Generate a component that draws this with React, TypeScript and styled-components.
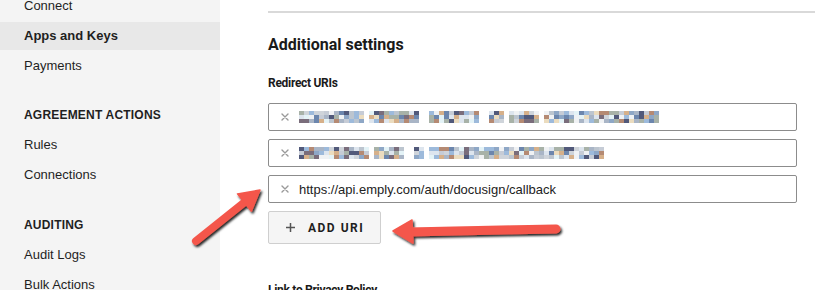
import React from 'react';
import styled, { createGlobalStyle } from 'styled-components';

const GlobalStyle = createGlobalStyle`
  html, body {
    margin: 0;
    padding: 0;
  }
  body {
    font-family: "Liberation Sans", Arial, sans-serif;
    background: #ffffff;
    color: #222222;
  }
`;

const Page = styled.div`
  position: relative;
  display: flex;
  width: 815px;
  height: 290px;
  overflow: hidden;
`;

const Sidebar = styled.nav`
  flex: none;
  width: 220px;
  background: #f4f4f4;
`;

const NavGroup = styled.div<{ $offset: number }>`
  display: flex;
  flex-direction: column;
  gap: 2px;
  margin-top: ${p => p.$offset}px;
`;

const NavItem = styled.div<{ $active?: boolean }>`
  height: 28px;
  padding-left: 24px;
  line-height: 28px;
  font-size: 13px;
  font-weight: ${p => (p.$active ? 700 : 400)};
  color: #1f1f1f;
  background: ${p => (p.$active ? '#e8e8e8' : 'transparent')};
  white-space: nowrap;
`;

const NavTitle = styled(NavItem)`
  font-size: 12px;
  font-weight: 700;
  letter-spacing: 0.2px;
  text-transform: uppercase;
`;

const Main = styled.main`
  flex: 1;
  min-width: 0;
  background: #ffffff;
  padding-left: 48px;
`;

const Divider = styled.div`
  margin-top: 11px;
  height: 2px;
  background: #d9d9d9;
`;

const Form = styled.section`
  padding-right: 18px;
`;

const Heading = styled.h2`
  margin: 22px 0 0;
  font-family: Roboto, "Liberation Sans", sans-serif;
  font-size: 16px;
  line-height: 20px;
  font-weight: 700;
  color: #1a1a1a;
`;

const FieldLabel = styled.div<{ $gap: number }>`
  margin-top: ${p => p.$gap}px;
  font-family: Roboto, "Liberation Sans", sans-serif;
  font-size: 12px;
  line-height: 16px;
  font-weight: 700;
  letter-spacing: -0.3px;
  color: #1a1a1a;
  white-space: nowrap;
`;

const UriList = styled.div`
  display: flex;
  flex-direction: column;
  gap: 8px;
  margin-top: 12px;
`;

const UriRow = styled.div`
  box-sizing: border-box;
  height: 28px;
  display: flex;
  align-items: center;
  padding-left: 12px;
  border: 1px solid #8c8c8c;
  border-radius: 2px;
  background: #ffffff;
`;

const RemoveIcon = styled.svg`
  flex: none;
  width: 8px;
  height: 8px;
  margin-right: 10px;
`;

const UriText = styled.span`
  font-size: 13px;
  color: #222222;
  white-space: nowrap;
`;

const Blur = styled.div`
  display: grid;
  grid-auto-flow: column;
  grid-template-rows: repeat(3, 4px);
  grid-auto-columns: 5px;
`;

const BlurCell = styled.span`
  display: block;
`;

const AddButton = styled.button`
  box-sizing: border-box;
  display: flex;
  align-items: center;
  gap: 13px;
  margin-top: 8px;
  width: 113px;
  height: 33px;
  padding: 0 0 0 17px;
  border: 1px solid #cfcfcf;
  border-radius: 2px;
  background: #f5f5f5;
  font-family: Roboto, "Liberation Sans", sans-serif;
  font-size: 12px;
  font-weight: 700;
  letter-spacing: 1.5px;
  color: #1e1e1e;
`;

const PlusIcon = styled.svg`
  flex: none;
  width: 9px;
  height: 9px;
`;

const Annotations = styled.svg`
  position: absolute;
  left: 0;
  top: 0;
  width: 815px;
  height: 290px;
  pointer-events: none;
`;

const palette = [
  '#c6ccd6', '#a9b5c6', '#8ea7c6', '#6c86ad', '#dde5ee', '#ebdcbf',
  '#d6b08a', '#b58a73', '#7a6d7b', '#a8b2a8', '#e4f3f7', '#bcc5cf',
  '#51597a', '#9dbadb', '#f0f2f4', '#cfd4da',
];

function blurColors(seed: number, segments: number[], gaps: number[]): string[] {
  let s = seed;
  const next = () => {
    s = (s * 1103515245 + 12345) % 2147483648;
    return s / 2147483648;
  };
  const out: string[] = [];
  segments.forEach((len, i) => {
    for (let c = 0; c < len; c++) {
      for (let r = 0; r < 3; r++) {
        out.push(palette[Math.floor(next() * palette.length)]);
      }
    }
    const g = gaps[i] ?? 0;
    for (let c = 0; c < g * 3; c++) out.push('transparent');
  });
  return out;
}

const BlurredText: React.FC<{ seed: number; segments: number[]; gaps: number[] }> = ({ seed, segments, gaps }) => (
  <Blur>
    {blurColors(seed, segments, gaps).map((c, i) => (
      <BlurCell key={i} style={{ background: c }} />
    ))}
  </Blur>
);

const Remove = () => (
  <RemoveIcon viewBox="0 0 8 8">
    <path d="M1 1L7 7M7 1L1 7" stroke="#9a9a9a" strokeWidth="1.4" strokeLinecap="round" />
  </RemoveIcon>
);

const App: React.FC = () => {
  return (
    <>
      <GlobalStyle />
      <Page>
        <Sidebar>
          <NavGroup $offset={-8}>
            <NavItem>Connect</NavItem>
            <NavItem $active>Apps and Keys</NavItem>
            <NavItem>Payments</NavItem>
          </NavGroup>
          <NavGroup $offset={21}>
            <NavTitle>Agreement Actions</NavTitle>
            <NavItem>Rules</NavItem>
            <NavItem>Connections</NavItem>
          </NavGroup>
          <NavGroup $offset={22}>
            <NavTitle>Auditing</NavTitle>
            <NavItem>Audit Logs</NavItem>
            <NavItem>Bulk Actions</NavItem>
          </NavGroup>
        </Sidebar>
        <Main>
          <Divider />
          <Form>
            <Heading>Additional settings</Heading>
            <FieldLabel $gap={20}>Redirect URIs</FieldLabel>
            <UriList>
              <UriRow>
                <Remove />
                <BlurredText seed={7} segments={[13, 10, 10, 3, 6, 23]} gaps={[1, 2, 2, 1, 1]} />
              </UriRow>
              <UriRow>
                <Remove />
                <BlurredText seed={91} segments={[14, 6, 2, 35]} gaps={[1, 2, 1]} />
              </UriRow>
              <UriRow>
                <Remove />
                <UriText>https://api.emply.com/auth/docusign/callback</UriText>
              </UriRow>
            </UriList>
            <AddButton type="button">
              <PlusIcon viewBox="0 0 9 9">
                <path d="M4.5 0V9M0 4.5H9" stroke="#555555" strokeWidth="1.5" />
              </PlusIcon>
              ADD URI
            </AddButton>
            <FieldLabel $gap={38}>Link to Privacy Policy</FieldLabel>
          </Form>
        </Main>
        <Annotations viewBox="0 0 815 290">
          <defs>
            <filter id="arrowShadow" x="-20%" y="-40%" width="140%" height="180%">
              <feDropShadow dx="1.5" dy="2" stdDeviation="1" floodColor="#000000" floodOpacity="0.85" />
            </filter>
          </defs>
          <g filter="url(#arrowShadow)" fill="#f4574b" stroke="#f4574b">
            <line x1="196" y1="241" x2="246" y2="201" strokeWidth="8" strokeLinecap="round" />
            <polygon points="260,190 251.3,211.1 237.5,193.9" strokeWidth="1.5" strokeLinejoin="round" />
            <line x1="408" y1="232" x2="556" y2="229" strokeWidth="9" strokeLinecap="round" />
            <polygon points="393,231 412,220 413,243" strokeWidth="1.5" strokeLinejoin="round" />
          </g>
        </Annotations>
      </Page>
    </>
  );
};

export default App;
